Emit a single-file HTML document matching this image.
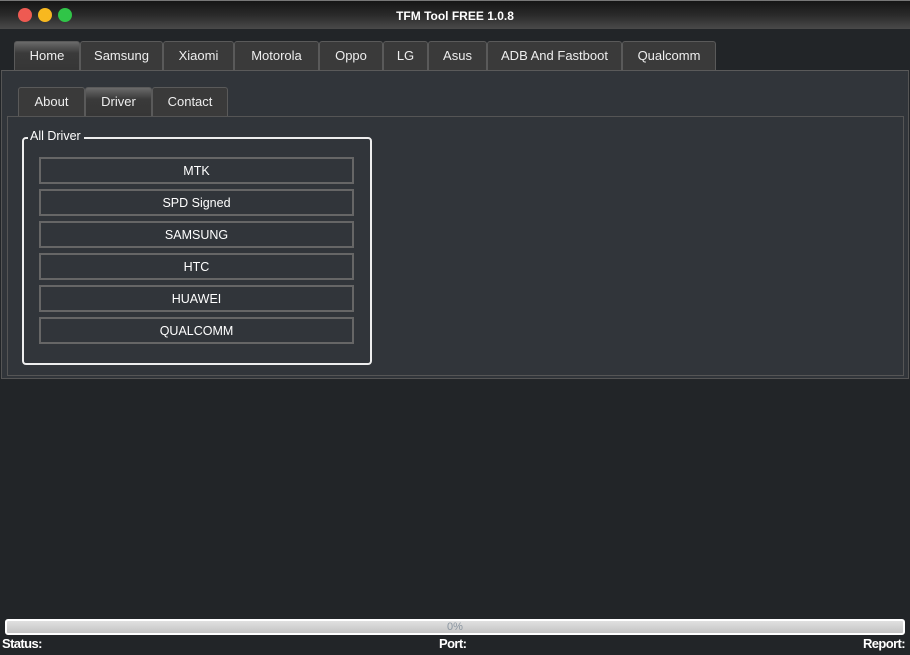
<!DOCTYPE html><html><head><style>
*{margin:0;padding:0;box-sizing:border-box}
body{width:910px;height:655px;background:#222528;font-family:"Liberation Sans",sans-serif;position:relative;overflow:hidden;color:#fff}
.abs{position:absolute}
.title{left:0;top:0;width:910px;height:29px;background:linear-gradient(#151515,#2a2a2a 50%,#4a4a4a);border-top:1px solid #777;}
.title span{position:absolute;left:0;right:0;top:8px;text-align:center;font-weight:bold;font-size:12px}
.dot{width:14px;height:14px;border-radius:50%;top:8px}
.tab{top:41px;height:29px;background:#3a3a3a;border:1px solid #5a5a5a;border-bottom:none;border-radius:3px 3px 0 0;font-size:13px;text-align:center;line-height:28px;color:#eee}
.tab.sel{background:linear-gradient(#6a6a6a,#3a3a3a 40%,#363636)}
.itab{top:87px;height:29px}
.btn{left:39px;width:315px;height:27px;border:2px solid #666;background:#31353a;font-size:12.5px;text-align:center;line-height:24px;color:#fff}
.st{top:636px;font-size:13px;font-weight:bold;letter-spacing:-0.6px}
</style></head><body>
<div class="abs title"><span>TFM Tool FREE 1.0.8</span></div>
<div class="abs dot" style="left:18px;background:#ee5a52"></div>
<div class="abs dot" style="left:38px;background:#f8b81f"></div>
<div class="abs dot" style="left:58px;background:#30c548"></div>
<div class="abs" style="left:1px;top:70px;width:908px;height:309px;background:#31353a;border:1px solid #555;border-top-color:#5a5a5a"></div>
<div class="abs tab sel" style="left:14px;width:66px">Home</div>
<div class="abs tab" style="left:80px;width:83px">Samsung</div>
<div class="abs tab" style="left:163px;width:71px">Xiaomi</div>
<div class="abs tab" style="left:234px;width:85px">Motorola</div>
<div class="abs tab" style="left:319px;width:64px">Oppo</div>
<div class="abs tab" style="left:383px;width:45px">LG</div>
<div class="abs tab" style="left:428px;width:59px">Asus</div>
<div class="abs tab" style="left:487px;width:135px">ADB And Fastboot</div>
<div class="abs tab" style="left:622px;width:94px">Qualcomm</div>
<div class="abs" style="left:7px;top:116px;width:897px;height:260px;border:1px solid #555"></div>
<div class="abs tab itab" style="left:18px;width:67px">About</div>
<div class="abs tab itab sel" style="left:85px;width:67px">Driver</div>
<div class="abs tab itab" style="left:152px;width:76px">Contact</div>
<div class="abs" style="left:22px;top:137px;width:350px;height:228px;border:2px solid #eee;border-radius:4px"></div>
<div class="abs" style="left:28px;top:129px;background:#31353a;padding:0 3px 0 2px;font-size:12.5px;line-height:15px">All Driver</div>
<div class="abs btn" style="top:157px">MTK</div>
<div class="abs btn" style="top:189px">SPD Signed</div>
<div class="abs btn" style="top:221px">SAMSUNG</div>
<div class="abs btn" style="top:253px">HTC</div>
<div class="abs btn" style="top:285px">HUAWEI</div>
<div class="abs btn" style="top:317px">QUALCOMM</div>
<div class="abs" style="left:5px;top:619px;width:900px;height:16px;border:2px solid #fff;border-radius:3px;background:linear-gradient(#e0e0e0,#c4c4c4);font-size:11px;color:#8a95a0;text-align:center;line-height:12px">0%</div>
<div class="abs st" style="left:2px">Status:</div>
<div class="abs st" style="left:439px">Port:</div>
<div class="abs st" style="right:5px">Report:</div>
</body></html>
